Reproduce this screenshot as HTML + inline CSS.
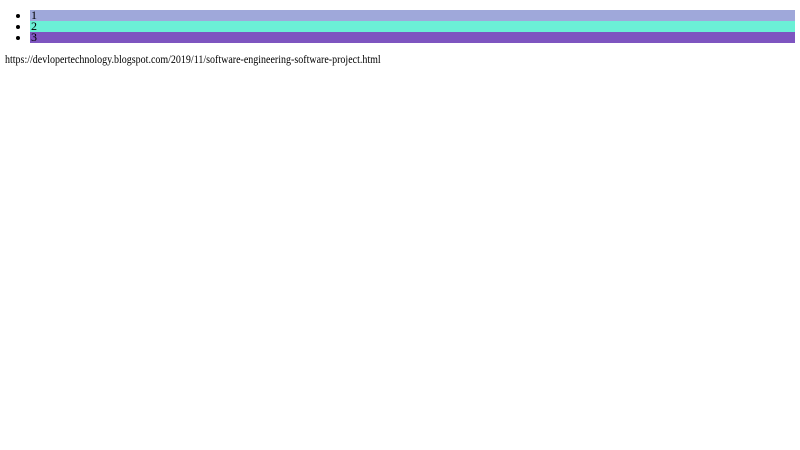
<!DOCTYPE html>
<html><head><style>
html,body{margin:0;padding:0;background:#fff;width:800px;height:450px;overflow:hidden;font-family:"Liberation Serif",serif;font-size:12px;color:#000}
ul{position:absolute;left:30px;top:10px;margin:0;padding:0;width:765px;list-style:disc}
li{height:11px;line-height:11px;padding-left:1px}
.a{background:#9fa8da}.b{background:#6bf0d6}.c{background:#7e55c0}
p{position:absolute;left:5px;top:52px;margin:0;line-height:14px;white-space:nowrap;transform:scaleX(0.833);transform-origin:0 0}
</style></head><body>
<ul><li class="a">1</li><li class="b">2</li><li class="c">3</li></ul>
<p>https://devlopertechnology.blogspot.com/2019/11/software-engineering-software-project.html</p>
</body></html>
